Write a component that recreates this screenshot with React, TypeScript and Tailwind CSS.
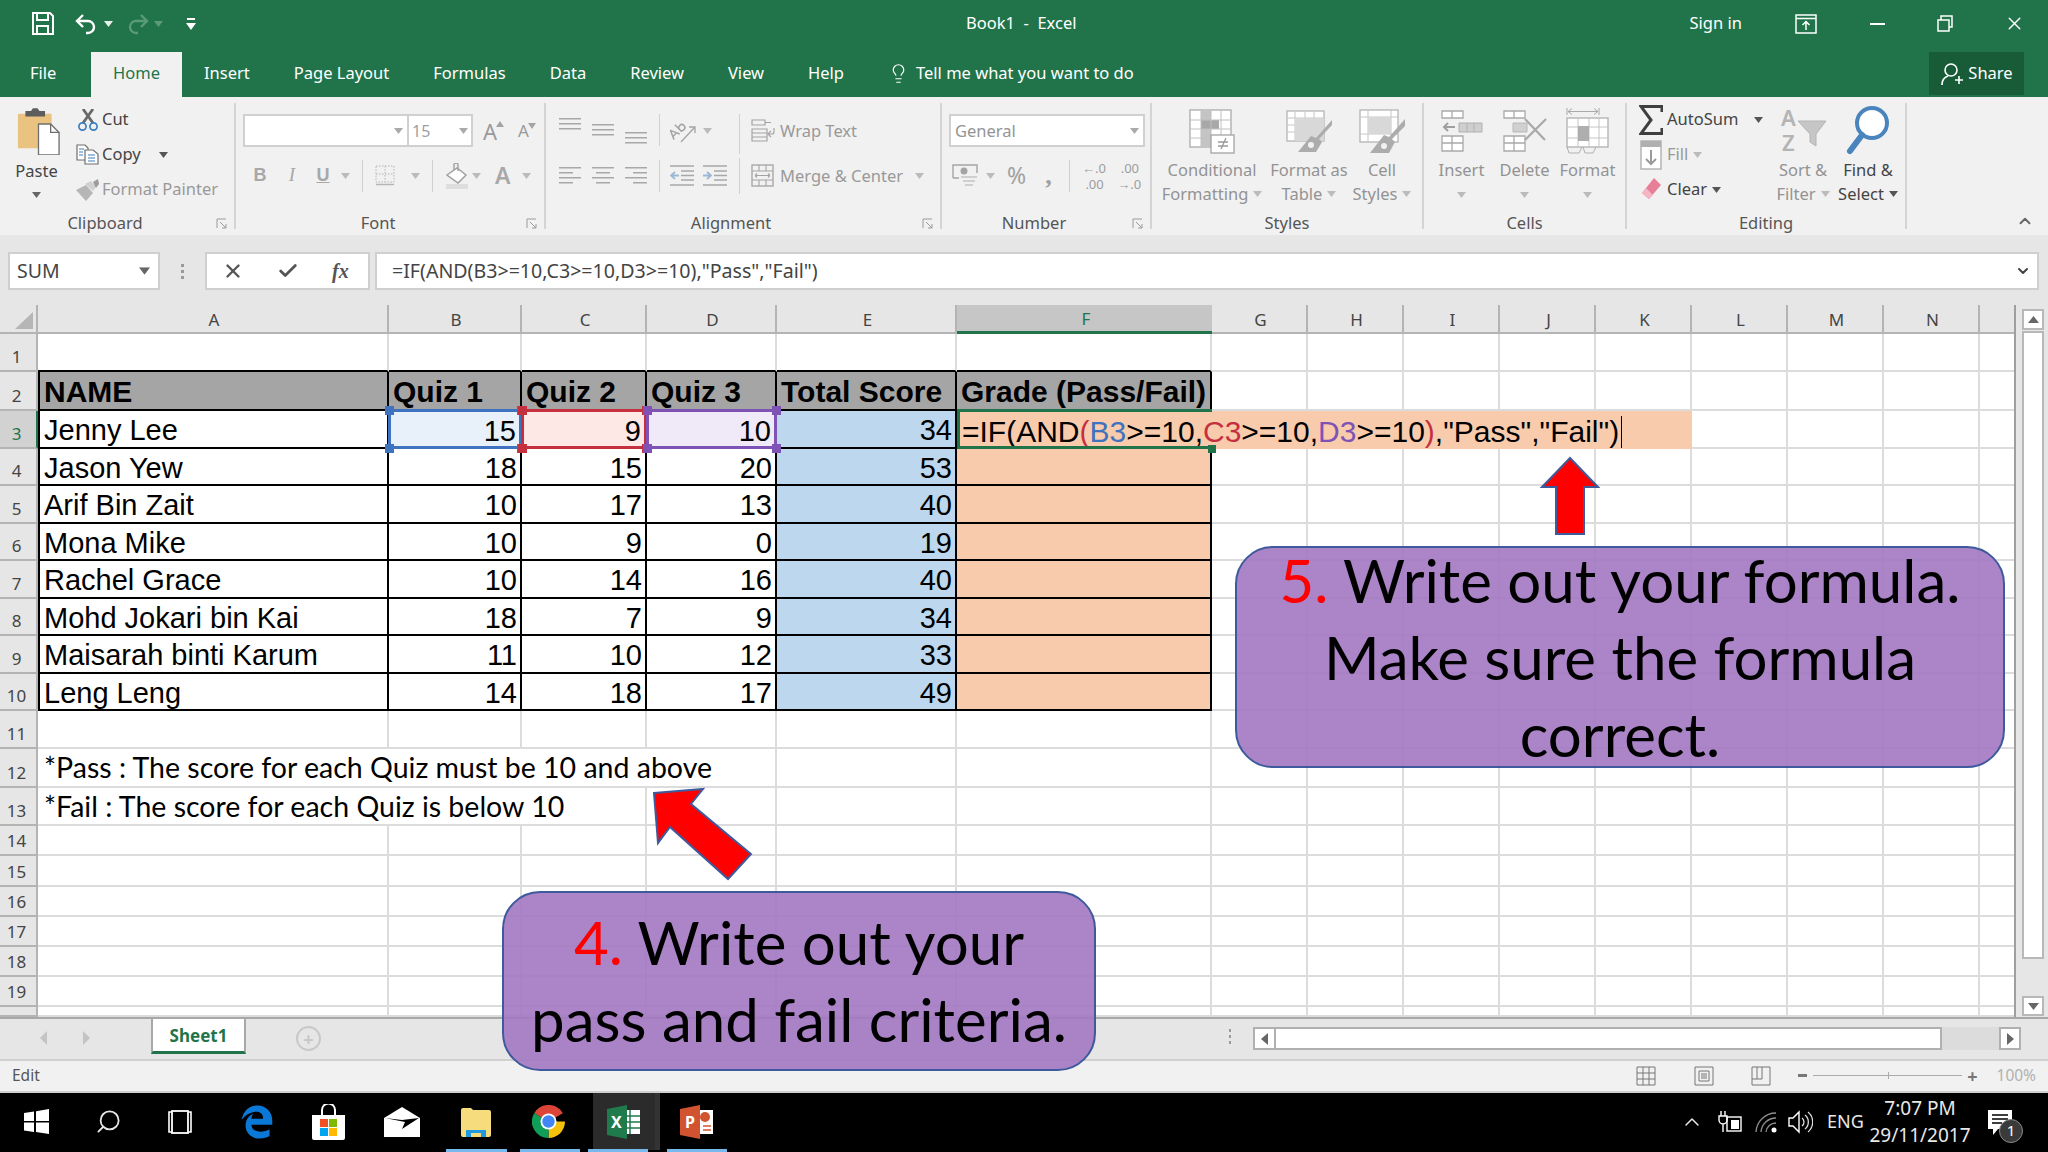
import { ReactNode } from "react";
import { Check, ChevronDown, ChevronUp, Lightbulb, Search, X } from "lucide-react";
import { FaEdgeLegacy } from "react-icons/fa";

function Caret({ color = "#8a8a8a", className = "" }: { color?: string; className?: string }) {
  return (
    <svg width="9" height="6" viewBox="0 0 9 6" className={className}>
      <path d="M0 0h9L4.5 6z" fill={color} />
    </svg>
  );
}

// alignment glyph: list of [y, x, length]
function Lines({ rows }: { rows: [number, number, number][] }) {
  const h = Math.max(...rows.map((r) => r[0])) + 2;
  return (
    <svg width="22" height={h} viewBox={`0 0 22 ${h}`} className="shrink-0">
      {rows.map(([y, x, len], i) => (
        <rect key={i} x={x} y={y} width={len} height="1.5" fill="#a8a8a8" />
      ))}
    </svg>
  );
}
const THREE: [number, number, number][] = [[0, 0, 22], [5, 0, 22], [10, 0, 22]];

// ---- clipboard
const PasteIcon = () => (
  <svg width="43" height="47" viewBox="0 0 46 50">
    <rect x="1" y="6" width="36" height="37" rx="1" fill="#e9c37f" />
    <path d="M9 6V3h6l2-3h5l2 3h6v6H9z" fill="#5d5d5d" />
    <path d="M23 17h13l9 9v24H23z" fill="#fff" stroke="#6f6f6f" strokeWidth="1.4" />
    <path d="M36 17v9h9" fill="none" stroke="#6f6f6f" strokeWidth="1.4" />
  </svg>
);
const CutIcon = () => (
  <svg width="22" height="22" viewBox="0 0 22 22">
    <path d="M6 0l10 14M16 0L6 14" stroke="#686868" strokeWidth="2.8" fill="none" />
    <circle cx="5.5" cy="17.5" r="3.6" fill="none" stroke="#3d7ec0" strokeWidth="1.7" />
    <circle cx="16.5" cy="17.5" r="3.6" fill="none" stroke="#3d7ec0" strokeWidth="1.7" />
  </svg>
);
const CopyIcon = () => (
  <svg width="23" height="21" viewBox="0 0 23 21">
    <path d="M1 1h8l3 3v12H1z" fill="#fff" stroke="#6f6f6f" strokeWidth="1.2" />
    <path d="M9 6h8l5 4v10H9z" fill="#fff" stroke="#6f6f6f" strokeWidth="1.2" />
    <path d="M3 5h5M3 8h4M3 11h4M12 11h7M12 14h7M12 17h7" stroke="#3d7ec0" strokeWidth="1.2" />
  </svg>
);
const PainterIcon = () => (
  <svg width="24" height="22" viewBox="0 0 24 22">
    <path d="M0 11l10-5 7 8-7 8z" fill="#b6b6b6" />
    <path d="M9 5l6-3 5 6-3 4z" fill="#d0d0d0" />
    <path d="M17 3l5-3 1 5-3 4z" fill="#9c9c9c" />
  </svg>
);

// ---- font group
const FontA = ({ size, up }: { size: number; up: boolean }) => (
  <span className="flex items-start">
    <span style={{ fontSize: size }} className="leading-none text-[#9a9a9a]">A</span>
    <svg width="8" height="6" viewBox="0 0 8 6" className="-ml-[1px] mt-[1px]">
      <path d={up ? "M4 0l4 6H0z" : "M0 0h8L4 6z"} fill="#a4a4a4" />
    </svg>
  </span>
);
const BorderIcon = () => (
  <svg width="20" height="21" viewBox="0 0 20 21">
    <rect x="1" y="1" width="18" height="16" fill="none" stroke="#b5b5b5" strokeDasharray="1.5 1.5" />
    <path d="M10 1v16M1 9h18" stroke="#b5b5b5" strokeDasharray="1.5 1.5" />
    <path d="M1 19.5h18" stroke="#b5b5b5" strokeWidth="1.5" />
  </svg>
);
const FillIcon = () => (
  <svg width="24" height="26" viewBox="0 0 24 26">
    <path d="M1 12L11 5l9 7-8 8z" fill="#fff" stroke="#a0a0a0" strokeWidth="1.5" />
    <path d="M8 7V2a2 2 0 014 0v6" fill="none" stroke="#a0a0a0" strokeWidth="1.4" />
    <rect x="0" y="21" width="22" height="5" fill="#dedede" />
  </svg>
);

// ---- alignment
const OrientIcon = () => (
  <svg width="27" height="27" viewBox="0 0 27 27">
    <g transform="rotate(-45 9 12)" stroke="#a4a4a4" fill="none" strokeWidth="1.5">
      <path d="M-2 16l4-9 4 9M-1 13h6" />
      <path d="M9 6v10M9 13a3 3 0 106 0 3 3 0 10-6 0" />
    </g>
    <path d="M11 25l13-14M19 10h6v6" stroke="#a4a4a4" fill="none" strokeWidth="1.3" />
  </svg>
);
const IndentIcon = ({ right }: { right: boolean }) => (
  <svg width="24" height="21" viewBox="0 0 24 21">
    <path d="M0 1h24M11 6h13M11 10.5h13M11 15h13M0 20h24" stroke="#a8a8a8" strokeWidth="1.4" />
    <path d={right ? "M0 10.5h7M4 7l4 3.5L4 14" : "M9 10.5H2M5 7l-4 3.5L5 14"} stroke="#9db8d4" strokeWidth="1.8" fill="none" />
  </svg>
);
const WrapIcon = () => (
  <svg width="24" height="23" viewBox="0 0 24 23">
    <path d="M1 1h13v5H1zM1 10h15v12H1zM1 14h15M1 18h15" stroke="#a4a4a4" fill="none" strokeWidth="1.2" />
    <path d="M14 3.5h6M23 9v4a2 2 0 01-2 2h-3M20 12l-3 3 3 3" stroke="#a4a4a4" fill="none" strokeWidth="1.2" />
  </svg>
);
const MergeIcon = () => (
  <svg width="23" height="23" viewBox="0 0 23 23">
    <rect x="1" y="1" width="21" height="21" fill="none" stroke="#a4a4a4" strokeWidth="1.3" />
    <path d="M1 7h21M1 16h21M8 1v6M15 1v6M8 16v6M15 16v6M4 11.5h15M4 11.5l2-2M4 11.5l2 2M19 11.5l-2-2M19 11.5l-2 2" stroke="#a4a4a4" fill="none" strokeWidth="1.1" />
  </svg>
);

// ---- number
const AccountingIcon = () => (
  <svg width="26" height="24" viewBox="0 0 26 24">
    <path d="M1 14V1h24v8M1 14h6" stroke="#a4a4a4" fill="none" strokeWidth="1.4" />
    <circle cx="12" cy="7" r="3.5" fill="#a4a4a4" />
    <path d="M9 13h16M11 17h12M13 21h8" stroke="#cfcfcf" strokeWidth="2.2" />
  </svg>
);
const DecIcon = ({ inc }: { inc: boolean }) => (
  <span className="flex flex-col items-start text-[13px] leading-[16px] text-[#9d9d9d]">
    {inc ? (
      <>
        <span className="whitespace-pre"> ←.0</span>
        <span className="whitespace-pre">  .00</span>
      </>
    ) : (
      <>
        <span className="whitespace-pre">  .00</span>
        <span className="whitespace-pre"> →.0</span>
      </>
    )}
  </span>
);

// ---- styles
const CondIcon = () => (
  <svg width="46" height="45" viewBox="0 0 46 45">
    <rect x="1" y="1" width="41" height="37" fill="#fff" stroke="#ababab" strokeWidth="1.3" />
    <rect x="12" y="1" width="10" height="37" fill="#c4c4c4" />
    <rect x="12" y="11" width="18" height="9" fill="#a8a8a8" />
    <path d="M1 11h41M1 20h41M1 29h41M12 1v37M22 1v37M32 1v37" stroke="#c0c0c0" />
    <rect x="22" y="26" width="23" height="18" fill="#fff" stroke="#a4a4a4" strokeWidth="1.3" />
    <path d="M29 33h10M29 37h10M37 29l-5 11" stroke="#999" strokeWidth="1.3" />
  </svg>
);
const TableIcon = () => (
  <svg width="46" height="42" viewBox="0 0 46 42">
    <rect x="1" y="1" width="37" height="30" fill="#fff" stroke="#b4b4b4" strokeWidth="1.3" />
    <path d="M1 8h37M1 15h37M1 22h37M9 1v30M19 1v30M28 1v30" stroke="#c6c6c6" />
    <rect x="9" y="8" width="29" height="23" fill="#d8d8d8" />
    <path d="M46 10L30 28 25 26 12 42h18l6-10-3-3 13-14z" fill="#acacac" />
    <circle cx="25" cy="35" r="3" fill="#f1f1f1" />
  </svg>
);
const CellStyleIcon = () => (
  <svg width="46" height="44" viewBox="0 0 46 44">
    <rect x="1" y="1" width="38" height="32" fill="#fff" stroke="#b4b4b4" strokeWidth="1.3" />
    <path d="M1 8h38M1 25h38M9 1v32M32 1v32" stroke="#c6c6c6" />
    <rect x="9" y="8" width="23" height="17" fill="#d8d8d8" />
    <path d="M46 10L30 28l-5-2-14 18h19l6-11-3-3 13-13z" fill="#acacac" />
    <circle cx="25" cy="37" r="3" fill="#f1f1f1" />
  </svg>
);

// ---- cells
const InsertIcon = () => (
  <svg width="42" height="42" viewBox="0 0 42 42">
    <path d="M1 1h21v7H1zM11 1v7M1 26h21v15H1zM1 33h21M11 26v15" fill="#fff" stroke="#a9a9a9" strokeWidth="1.3" />
    <path d="M18 13h23v9H18zM26 13v9M33 13v9" fill="#cfcfcf" stroke="#b0b0b0" />
    <path d="M14 17H3M7 13l-4 4 4 4" fill="none" stroke="#a0a0a0" strokeWidth="2" />
  </svg>
);
const DeleteIcon = () => (
  <svg width="44" height="42" viewBox="0 0 44 42">
    <path d="M1 1h21v7H1zM11 1v7M1 26h21v15H1zM1 33h21M11 26v15" fill="#fff" stroke="#a9a9a9" strokeWidth="1.3" />
    <path d="M10 13h14v9H10z" fill="#d0d0d0" stroke="#b8b8b8" />
    <path d="M22 30L43 9M22 9l20 21" stroke="#a8a8a8" strokeWidth="2.2" />
  </svg>
);
const FormatIcon = () => (
  <svg width="43" height="46" viewBox="0 0 43 46">
    <path d="M1 0v7M33 0v7M2 3.5h30M2 3.5l4-3M2 3.5l4 3M32 3.5l-4-3M32 3.5l-4 3" stroke="#a9a9a9" fill="none" />
    <rect x="1" y="10" width="41" height="29" fill="#fff" stroke="#b0b0b0" strokeWidth="1.3" />
    <path d="M1 19h41M1 30h41M12 10v29M23 10v29M33 10v29" stroke="#c4c4c4" />
    <rect x="12" y="18" width="11" height="15" fill="#aeaeae" />
    <path d="M1 39l2 6h10l3-6M17 39l2 6h8l3-6" stroke="#b0b0b0" fill="none" />
  </svg>
);

// ---- editing
const SigmaIcon = () => (
  <svg width="24" height="30" viewBox="0 0 24 30">
    <path d="M23 7V1.5H2L12 15 2 28.5h21V23" fill="none" stroke="#3f3f3f" strokeWidth="3" />
  </svg>
);
const FillDownIcon = () => (
  <svg width="22" height="30" viewBox="0 0 22 30">
    <rect x="1" y="1" width="20" height="28" fill="#fff" stroke="#b0b0b0" strokeWidth="1.4" />
    <rect x="1" y="1" width="20" height="6" fill="#b0b0b0" />
    <path d="M11 10v14M6 19l5 5 5-5" fill="none" stroke="#9a9a9a" strokeWidth="2" />
  </svg>
);
const EraserIcon = () => (
  <svg width="20" height="24" viewBox="0 0 20 24">
    <path d="M13 0l7 7L8 21l-7-6z" fill="#e77f97" />
    <path d="M5 10l7 7-4 4-7-6z" fill="#f3b6c4" />
  </svg>
);
const SortIcon = () => (
  <svg width="48" height="50" viewBox="0 0 48 50" className="overflow-visible">
    <text x="2" y="20" fontFamily="'Noto Sans'" fontSize="22" fontWeight="600" fill="#b4b4b4">A</text>
    <text x="3" y="45" fontFamily="'Noto Sans'" fontSize="22" fontWeight="600" fill="#b4b4b4">Z</text>
    <path d="M19 15h28L37 28v12l-6-4v-8z" fill="#c6c6c6" stroke="#b4b4b4" />
  </svg>
);
const FindIcon = () => (
  <svg width="44" height="52" viewBox="0 0 44 52">
    <circle cx="26" cy="18" r="15" fill="#fff" stroke="#4a84bd" strokeWidth="4" />
    <path d="M16 30L4 46" stroke="#4a84bd" strokeWidth="6" strokeLinecap="round" />
  </svg>
);

// ---- ribbon building blocks
function Group({ width, label, launcher, children }: { width: string; label: string; launcher?: boolean; children: ReactNode }) {
  return (
    <div className={`${width} flex h-[126px] flex-col border-r-2 border-[#d4d4d4]`}>
      <div className="flex h-[110px] shrink-0">{children}</div>
      <div className={`relative flex h-[20px] shrink-0 items-center justify-center text-[16.5px] text-[#555] ${launcher ? "pr-[24px]" : ""}`}>
        {label}
        {launcher && (
          <svg width="11" height="11" viewBox="0 0 11 11" className="absolute bottom-[4px] right-[7px]">
            <path d="M1 10V1h9M4 4l6 6M10 6v4H6" fill="none" stroke="#9a9a9a" />
          </svg>
        )}
      </div>
    </div>
  );
}

function SmallBtn({ icon, label, muted, caret }: { icon: ReactNode; label: string; muted?: boolean; caret?: boolean }) {
  return (
    <div className="flex h-[35px] items-center">
      <div className="flex w-[29px] justify-center">{icon}</div>
      <span className={`text-[16.5px] ${muted ? "text-[#999]" : "text-[#444]"}`}>{label}</span>
      {caret && <Caret color={muted ? "#bbb" : "#555"} className="ml-[18px]" />}
    </div>
  );
}

function BigBtn({ width, icon, lines, caretInline, muted = true }: { width: string; icon: ReactNode; lines: string[]; caretInline?: boolean; muted?: boolean }) {
  return (
    <div className={`${width} flex flex-col items-center text-[16.5px] leading-[24px] ${muted ? "text-[#939393]" : "text-[#444]"}`}>
      <div className="flex h-[56px] items-center justify-center">{icon}</div>
      {lines.map((l, i) => (
        <span key={l} className="flex -translate-y-[1px] items-center whitespace-nowrap">
          {l}
          {caretInline && i === lines.length - 1 && <Caret color={muted ? "#bbb" : "#555"} className="ml-[5px]" />}
        </span>
      ))}
      {!caretInline && <span className="flex h-[24px] items-center"><Caret color="#bbb" /></span>}
    </div>
  );
}

const ALIGN_LEFT: [number, number, number][] = [[0, 0, 22], [5, 0, 14], [10, 0, 22], [15, 0, 14]];
const ALIGN_CENTER: [number, number, number][] = [[0, 0, 22], [5, 4, 14], [10, 0, 22], [15, 4, 14]];
const ALIGN_RIGHT: [number, number, number][] = [[0, 0, 22], [5, 8, 14], [10, 0, 22], [15, 8, 14]];

function Ribbon() {
  return (
    <div className="relative flex h-[138px] bg-[#f1f1f1] pt-[6px] font-['Noto_Sans',sans-serif]">
      <Group width="w-[236px]" label="Clipboard" launcher>
        <div className="flex w-[73px] flex-col items-center text-[16.5px] leading-[24px] text-[#444]">
          <div className="flex h-[56px] items-center pl-[4px]"><PasteIcon /></div>
          <span>Paste</span>
          <span className="flex h-[24px] items-center"><Caret color="#666" /></span>
        </div>
        <div className="-mt-[1px] flex flex-col">
          <SmallBtn icon={<CutIcon />} label="Cut" />
          <SmallBtn icon={<CopyIcon />} label="Copy" caret />
          <SmallBtn icon={<PainterIcon />} label="Format Painter" muted />
        </div>
      </Group>

      <Group width="w-[310px]" label="Font" launcher>
        <div className="flex flex-col pl-[7px] pt-[11px]">
          <div className="flex h-[33px] items-center">
            <div className="flex h-[33px] w-[166px] items-center justify-end border-2 border-[#d0d0d0] bg-white pr-[4px]"><Caret color="#aaa" /></div>
            <div className="flex h-[33px] w-[64px] items-center justify-between border-2 border-l-0 border-[#d0d0d0] bg-white px-[3px] text-[16px] text-[#9f9f9f]">15<Caret color="#aaa" /></div>
            <div className="ml-[10px] flex items-center gap-[14px]">
              <FontA size={22} up />
              <FontA size={17} up={false} />
            </div>
          </div>
          <div className="mt-[12px] flex h-[33px] items-center text-[#a8a8a8]">
            <span className="w-[30px] pl-[4px] text-center font-['Liberation_Sans',sans-serif] text-[18px] font-bold">B</span>
            <span className="w-[30px] pl-[8px] text-center font-['Liberation_Serif',serif] text-[19px] italic">I</span>
            <span className="w-[34px] pl-[6px] text-center font-['Liberation_Sans',sans-serif] text-[18px] font-bold underline">U</span>
            <Caret color="#bbb" className="ml-[4px]" />
            <div className="ml-[12px] mr-[12px] h-[32px] w-px bg-[#d0d0d0]" />
            <BorderIcon />
            <Caret color="#bbb" className="ml-[16px]" />
            <div className="ml-[12px] mr-[13px] h-[32px] w-px bg-[#d0d0d0]" />
            <FillIcon />
            <Caret color="#bbb" className="ml-[2px]" />
            <span className="ml-[14px] text-[23px] font-semibold leading-none">A</span>
            <Caret color="#bbb" className="ml-[12px]" />
          </div>
        </div>
      </Group>

      <Group width="w-[396px]" label="Alignment" launcher>
        <div className="flex flex-col pl-[11px] pt-[11px]">
          <div className="flex h-[33px]">
            <div className="flex w-[102px] gap-[11px] pl-[2px]">
              <div className="mt-[4px]"><Lines rows={THREE} /></div>
              <div className="mt-[10px]"><Lines rows={THREE} /></div>
              <div className="mt-[18px]"><Lines rows={THREE} /></div>
            </div>
            <div className="h-[32px] w-px bg-[#d0d0d0]" />
            <div className="flex items-center pl-[10px]"><OrientIcon /><Caret color="#bbb" className="ml-[6px]" /></div>
            <div className="ml-[27px] h-[40px] w-px bg-[#d0d0d0]" />
            <div className="ml-[11px] flex items-center">
              <WrapIcon />
              <span className="ml-[5px] pt-[2px] text-[16.5px] text-[#999]">Wrap Text</span>
            </div>
          </div>
          <div className="mt-[12px] flex h-[33px] items-center">
            <div className="flex w-[102px] gap-[11px] pl-[2px]">
              <Lines rows={ALIGN_LEFT} />
              <Lines rows={ALIGN_CENTER} />
              <Lines rows={ALIGN_RIGHT} />
            </div>
            <div className="h-[32px] w-px bg-[#d0d0d0]" />
            <div className="flex items-center gap-[9px] pl-[10px]"><IndentIcon right={false} /><IndentIcon right /></div>
            <div className="ml-[12px] h-[36px] w-px bg-[#d0d0d0]" />
            <div className="ml-[11px] flex items-center">
              <MergeIcon />
              <span className="ml-[6px] pt-[2px] text-[16.5px] text-[#999]">Merge &amp; Center</span>
              <Caret color="#bbb" className="ml-[12px]" />
            </div>
          </div>
        </div>
      </Group>

      <Group width="w-[210px]" label="Number" launcher>
        <div className="flex flex-col pl-[7px] pt-[11px]">
          <div className="flex h-[33px] w-[196px] items-center justify-between border-2 border-[#d0d0d0] bg-white px-[4px] pt-[1px] text-[16.5px] text-[#949494]">General<Caret color="#aaa" /></div>
          <div className="mt-[12px] flex h-[33px] items-center pl-[3px] text-[#a0a0a0]">
            <AccountingIcon />
            <Caret color="#bbb" className="ml-[8px]" />
            <span className="ml-[12px] text-[23px] leading-none">%</span>
            <span className="ml-[19px] font-['Liberation_Serif',serif] text-[26px] font-bold leading-none">,</span>
            <div className="ml-[17px] h-[32px] w-px bg-[#d0d0d0]" />
            <div className="ml-[9px]"><DecIcon inc /></div>
            <div className="ml-[8px]"><DecIcon inc={false} /></div>
          </div>
        </div>
      </Group>

      <Group width="w-[272px]" label="Styles">
        <div className="flex pl-[6px]">
          <BigBtn width="w-[108px]" icon={<CondIcon />} lines={["Conditional", "Formatting"]} caretInline />
          <BigBtn width="w-[86px]" icon={<TableIcon />} lines={["Format as", "Table"]} caretInline />
          <BigBtn width="w-[60px]" icon={<CellStyleIcon />} lines={["Cell", "Styles"]} caretInline />
        </div>
      </Group>

      <Group width="w-[203px]" label="Cells">
        <div className="flex pl-[6px]">
          <BigBtn width="w-[63px]" icon={<InsertIcon />} lines={["Insert"]} />
          <BigBtn width="w-[63px]" icon={<DeleteIcon />} lines={["Delete"]} />
          <BigBtn width="w-[63px]" icon={<FormatIcon />} lines={["Format"]} />
        </div>
      </Group>

      <Group width="w-[280px]" label="Editing">
        <div className="-mt-[1px] flex w-[148px] flex-col pl-[8px]">
          <div className="flex h-[35px] items-center">
            <div className="flex w-[32px] justify-center"><SigmaIcon /></div>
            <span className="text-[16.5px] text-[#444]">AutoSum</span>
            <Caret color="#555" className="ml-[16px]" />
          </div>
          <div className="flex h-[35px] items-center">
            <div className="flex w-[32px] justify-center"><FillDownIcon /></div>
            <span className="text-[16.5px] text-[#999]">Fill</span>
            <Caret color="#bbb" className="ml-[5px]" />
          </div>
          <div className="flex h-[35px] items-center">
            <div className="flex w-[32px] justify-center"><EraserIcon /></div>
            <span className="text-[16.5px] text-[#444]">Clear</span>
            <Caret color="#555" className="ml-[5px]" />
          </div>
        </div>
        <BigBtn width="w-[56px]" icon={<SortIcon />} lines={["Sort &", "Filter"]} caretInline />
        <BigBtn width="w-[74px]" icon={<FindIcon />} lines={["Find &", "Select"]} caretInline muted={false} />
      </Group>

      <ChevronUp className="absolute bottom-[5px] right-[14px] h-[18px] w-[18px] text-[#666]" strokeWidth={2.5} />
    </div>
  );
}

function TitleBar() {
  return (
    <div className="relative flex h-[52px] items-center bg-[#21744a] pb-[5px] pl-[32px] font-['Noto_Sans',sans-serif] text-white">
      <svg width="22" height="23" viewBox="0 0 22 23">
        <path d="M1 1h17l3 3v18H1z" fill="none" stroke="#fff" strokeWidth="2" />
        <path d="M5 1v7h11V1M5 22v-8h11v8" fill="none" stroke="#fff" strokeWidth="2" />
      </svg>
      <svg width="24" height="24" viewBox="0 0 24 24" className="ml-[21px]">
        <path d="M8 3L2 9l6 6" fill="none" stroke="#fff" strokeWidth="2.4" />
        <path d="M3 9h10a6 6 0 016 6v0a6 6 0 01-6 6h-2" fill="none" stroke="#fff" strokeWidth="2.4" />
      </svg>
      <Caret color="#e8f0eb" className="ml-[5px]" />
      <svg width="24" height="24" viewBox="0 0 24 24" className="ml-[12px]">
        <path d="M16 3l6 6-6 6" fill="none" stroke="#5a9a78" strokeWidth="2.4" />
        <path d="M21 9H11a6 6 0 00-6 6v0a6 6 0 006 6h2" fill="none" stroke="#5a9a78" strokeWidth="2.4" />
      </svg>
      <Caret color="#5a9a78" className="ml-[5px]" />
      <svg width="10" height="14" viewBox="0 0 10 14" className="ml-[23px]">
        <path d="M1 1h8v2H1zM0 6h10L5 13z" fill="#fff" />
      </svg>
      <span className="ml-[770px] text-[16.5px] whitespace-pre">Book1  -  Excel</span>
      <span className="ml-[613px] text-[16.5px]">Sign in</span>
      <svg width="22" height="20" viewBox="0 0 22 20" className="ml-[53px]">
        <rect x="1" y="1" width="20" height="18" fill="none" stroke="#fff" strokeWidth="1.5" />
        <path d="M1 4.5h20M11 16V8M7.5 11L11 7.5l3.5 3.5" fill="none" stroke="#fff" strokeWidth="1.5" />
      </svg>
      <div className="ml-[53px] h-[2px] w-[15px] bg-white" />
      <svg width="16" height="17" viewBox="0 0 16 17" className="ml-[52px]">
        <path d="M1 5h11v11H1zM4 5V1h11v11h-3" fill="none" stroke="#fff" strokeWidth="1.5" />
      </svg>
      <X className="ml-[51px] h-[21px] w-[21px]" strokeWidth={1.6} />
    </div>
  );
}

function TabBar() {
  const tabs = ["Insert", "Page Layout", "Formulas", "Data", "Review", "View", "Help"];
  return (
    <div className="flex h-[45px] items-stretch bg-[#21744a] font-['Noto_Sans',sans-serif] text-[16.5px] text-white">
      <span className="flex w-[91px] items-center pb-[2px] pl-[30px]">File</span>
      <span className="flex w-[91px] items-center justify-center bg-[#f1f1f1] pb-[2px] text-[#21744a]">Home</span>
      {tabs.map((t) => (
        <span key={t} className="flex items-center px-[22px] pb-[2px]">{t}</span>
      ))}
      <div className="ml-[22px] flex items-center pb-[2px]">
        <Lightbulb className="h-[21px] w-[21px]" strokeWidth={1.4} />
        <span className="ml-[7px]">Tell me what you want to do</span>
      </div>
      <div className="ml-auto mr-[24px] flex h-[43px] w-[95px] items-center justify-center gap-[4px] bg-[#185c37]">
        <svg width="24" height="24" viewBox="0 0 24 24">
          <circle cx="11" cy="8" r="6" fill="none" stroke="#fff" strokeWidth="1.6" />
          <path d="M2 23c0-5 3-8 6-9M15 18h8M19 14v8" fill="none" stroke="#fff" strokeWidth="1.6" />
        </svg>
        <span>Share</span>
      </div>
    </div>
  );
}

function FormulaBar() {
  return (
    <div className="flex h-[70px] items-center bg-[#e6e6e6] pt-[2px] font-['Noto_Sans',sans-serif]">
      <div className="ml-[8px] flex h-[38px] w-[152px] items-center justify-between border-2 border-[#cfcfcf] bg-white pl-[7px] pr-[9px] text-[19.5px] text-[#444]">
        SUM
        <Caret color="#666" className="scale-125" />
      </div>
      <div className="ml-[21px] flex flex-col gap-[3px]">
        <i className="h-[3px] w-[3px] bg-[#9a9a9a]" />
        <i className="h-[3px] w-[3px] bg-[#9a9a9a]" />
        <i className="h-[3px] w-[3px] bg-[#9a9a9a]" />
      </div>
      <div className="ml-[21px] flex h-[38px] w-[165px] items-center gap-[33px] border-2 border-[#cfcfcf] bg-white pl-[15px] text-[#555]">
        <X className="h-[22px] w-[22px]" strokeWidth={2.6} />
        <Check className="h-[22px] w-[22px]" strokeWidth={3} />
        <span className="font-['Liberation_Serif',serif] text-[20px] font-bold italic">fx</span>
      </div>
      <div className="ml-[5px] flex h-[38px] w-[1664px] items-center justify-between border-2 border-[#cfcfcf] bg-white pl-[15px] pr-[6px] text-[19.6px] text-[#444]">
        =IF(AND(B3&gt;=10,C3&gt;=10,D3&gt;=10),"Pass","Fail")
        <ChevronDown className="h-[16px] w-[16px]" strokeWidth={3} />
      </div>
    </div>
  );
}

const COLS = ["A", "B", "C", "D", "E", "F", "G", "H", "I", "J", "K", "L", "M", "N"];
const TABLE: [string, number, number, number, number][] = [
  ["Jenny Lee", 15, 9, 10, 34],
  ["Jason Yew", 18, 15, 20, 53],
  ["Arif Bin Zait", 10, 17, 13, 40],
  ["Mona Mike", 10, 9, 0, 19],
  ["Rachel Grace", 10, 14, 16, 40],
  ["Mohd Jokari bin Kai", 18, 7, 9, 34],
  ["Maisarah binti Karum", 11, 10, 12, 33],
  ["Leng Leng", 14, 18, 17, 49],
];
const HEADERS = ["NAME", "Quiz 1", "Quiz 2", "Quiz 3", "Total Score", "Grade (Pass/Fail)"];

const blankCell = "border-r-2 border-b-2 border-[#dcdcdc]";
const tableCell = "border-r-2 border-b-2 border-black";

function Blank({ n, from = 0 }: { n: number; from?: number }) {
  return (
    <>
      {Array.from({ length: n }, (_, i) => (
        <div key={from + i} className={blankCell} />
      ))}
    </>
  );
}

function RowHead({ n }: { n: number }) {
  const active = n === 3;
  return (
    <div
      className={`flex items-end justify-center border-b-2 pr-[3px] font-['Noto_Sans',sans-serif] text-[17px] leading-[26px] ${
        active ? "border-r-2 border-r-[#21744a] border-b-[#b4b4b4] bg-[#d2d2d2] text-[#21744a]" : "border-r-2 border-r-[#b4b4b4] border-b-[#b4b4b4] bg-[#e6e6e6] text-[#444]"
      }`}
    >
      {n < 20 ? n : null}
    </div>
  );
}

// a cell the formula refers to: coloured box with square handles in the corners
function RefCell({ value, bg, border, handle }: { value: number; bg: string; border: string; handle: string }) {
  const dot = `absolute h-[9px] w-[9px] ${handle}`;
  return (
    <div className={`relative flex items-center justify-end pr-[6px] pt-[4px] ${bg}`}>
      {value}
      <div className={`absolute -left-[1px] -top-[2px] bottom-0 right-0 border-[3px] ${border}`} />
      <i className={`${dot} -left-[4px] -top-[5px]`} />
      <i className={`${dot} -left-[4px] -bottom-[4px]`} />
      <i className={`${dot} -right-[4px] -top-[5px]`} />
      <i className={`${dot} -right-[4px] -bottom-[4px]`} />
    </div>
  );
}

function Sheet() {
  return (
    <div className="grid h-[712px] w-[2016px] grid-cols-[38px_351px_133px_125px_130px_180px_255px_repeat(8,96px)_36px] grid-rows-[29px_38px_39px_38px_37px_38px_37px_38px_37px_38px_37px_38px_39px_38px_30px_31px_30px_30px_30px_30px_10px] overflow-hidden border-r-2 border-[#9f9f9f] bg-white font-['Liberation_Sans',Arial,sans-serif] text-[29px] text-black">
      {/* column heads */}
      <div className="relative border-r-2 border-b-2 border-[#b4b4b4] bg-[#e6e6e6]">
        <svg width="18" height="17" viewBox="0 0 18 17" className="absolute left-[15px] top-[7px]">
          <path d="M18 0v17H0z" fill="#b6b6b6" />
        </svg>
      </div>
      {COLS.map((c) => (
        <div
          key={c}
          className={`flex items-center justify-center pl-[3px] pt-[2px] font-['Noto_Sans',sans-serif] text-[17px] ${
            c === "F" ? "border-b-[3px] border-b-[#21744a] bg-[#c6c6c6] text-[#21744a]" : "border-r-2 border-b-2 border-[#b4b4b4] bg-[#e6e6e6] text-[#444]"
          }`}
        >
          {c}
        </div>
      ))}
      <div className="border-b-2 border-[#b4b4b4] bg-[#e6e6e6]" />

      {/* row 1 */}
      <RowHead n={1} />
      {HEADERS.map((h) => (
        <div key={h} className="border-r-2 border-b-2 border-r-[#dcdcdc] border-b-black" />
      ))}
      <Blank n={9} />

      {/* row 2 */}
      <RowHead n={2} />
      {HEADERS.map((h, i) => (
        <div key={h} className={`flex items-center whitespace-nowrap bg-[#a5a5a5] pl-[4px] pt-[2px] text-[30px] font-bold ${tableCell} ${i === 0 ? "border-l-2" : ""}`}>
          {h}
        </div>
      ))}
      <Blank n={9} />

      {/* rows 3 to 10 */}
      {TABLE.map(([name, q1, q2, q3, total], i) => (
        <div key={name} className="contents">
          <RowHead n={i + 3} />
          <div className={`flex items-center whitespace-nowrap border-l-2 pl-[4px] pt-[4px] ${tableCell}`}>{name}</div>
          {i === 0 ? (
            <>
              <RefCell value={q1} bg="bg-[#e8f0fa]" border="border-[#3f72bf]" handle="bg-[#3f72bf]" />
              <RefCell value={q2} bg="bg-[#fde8e6]" border="border-[#c5303f]" handle="bg-[#c5303f]" />
              <RefCell value={q3} bg="bg-[#f0eaf8]" border="border-[#7f52b5]" handle="bg-[#7f52b5]" />
            </>
          ) : (
            [q1, q2, q3].map((q, j) => (
              <div key={j} className={`flex items-center justify-end pr-[3px] pt-[4px] ${tableCell}`}>{q}</div>
            ))
          )}
          <div className={`flex items-center justify-end bg-[#bdd7ee] pr-[3px] pt-[4px] ${tableCell}`}>{total}</div>
          {i === 0 ? (
            <>
              <div className="relative col-span-6 flex items-center whitespace-nowrap bg-[#f8cbad] pl-[5px] pt-[3px] text-[30px]">
                =IF(AND<span className="text-[#c5303f]">(</span>
                <span className="text-[#3f72bf]">B3</span>&gt;=10,
                <span className="text-[#c5303f]">C3</span>&gt;=10,
                <span className="text-[#7f52b5]">D3</span>&gt;=10
                <span className="text-[#c5303f]">)</span>,"Pass","Fail")
                <span className="ml-[2px] h-[32px] w-px bg-black" />
                <div className="absolute -top-[2px] bottom-0 left-0 w-[255px] border-[3px] border-r-0 border-[#21744a]" />
                <i className="absolute -bottom-[4px] left-[251px] h-[8px] w-[8px] bg-[#21744a]" />
              </div>
              <Blank n={4} />
            </>
          ) : (
            <>
              <div className={`bg-[#f8cbad] ${tableCell}`} />
              <Blank n={9} />
            </>
          )}
        </div>
      ))}

      {/* rows 11 to 20 */}
      <RowHead n={11} />
      <Blank n={15} />
      <RowHead n={12} />
      <div className={`col-span-4 flex items-center whitespace-nowrap pl-[6px] font-['Lato',sans-serif] text-[28.5px] ${blankCell}`}>
        *Pass : The score for each Quiz must be 10 and above
      </div>
      <Blank n={11} />
      <RowHead n={13} />
      <div className={`col-span-3 flex items-center whitespace-nowrap pl-[6px] font-['Lato',sans-serif] text-[28.5px] ${blankCell}`}>
        *Fail : The score for each Quiz is below 10
      </div>
      <Blank n={12} />
      {[14, 15, 16, 17, 18, 19, 20].map((n) => (
        <div key={n} className="contents">
          <RowHead n={n} />
          <Blank n={15} />
        </div>
      ))}
    </div>
  );
}

function VScroll() {
  return (
    <div className="flex h-[712px] w-[32px] flex-col items-center bg-[#e6e6e6] pl-[2px] pt-[4px]">
      <div className="flex h-[21px] w-[22px] items-center justify-center border-2 border-[#b8b8b8] bg-white">
        <svg width="11" height="7" viewBox="0 0 11 7"><path d="M5.5 0L11 7H0z" fill="#666" /></svg>
      </div>
      <div className="mt-[1px] h-[628px] w-[22px] border-2 border-[#b8b8b8] bg-white" />
      <div className="flex-1" />
      <div className="mb-[1px] flex h-[20px] w-[22px] items-center justify-center border-2 border-[#b8b8b8] bg-white">
        <svg width="11" height="7" viewBox="0 0 11 7"><path d="M0 0h11L5.5 7z" fill="#666" /></svg>
      </div>
    </div>
  );
}

function SheetTabs() {
  return (
    <div className="flex h-[42px] items-start border-t-2 border-[#a8a8a8] bg-[#e6e6e6] font-['Noto_Sans',sans-serif]">
      <div className="flex w-[151px] items-center gap-[36px] pl-[40px] pt-[12px]">
        <svg width="7" height="14" viewBox="0 0 7 14"><path d="M7 0v14L0 7z" fill="#c4c4c4" /></svg>
        <svg width="7" height="14" viewBox="0 0 7 14"><path d="M0 0v14l7-7z" fill="#c4c4c4" /></svg>
      </div>
      <div className="-mt-[2px] flex h-[37px] w-[95px] items-center justify-center border-x-2 border-t-2 border-b-[3px] border-x-[#a8a8a8] border-t-[#a8a8a8] border-b-[#21744a] bg-white pt-[1px] text-[17px] font-bold text-[#21744a]">
        Sheet1
      </div>
      <div className="ml-[50px] mt-[7px] flex h-[25px] w-[25px] items-center justify-center rounded-full border-2 border-[#c8c8c8] text-[18px] font-bold leading-none text-[#c8c8c8]">+</div>
      <div className="ml-[908px] mt-[10px] flex flex-col gap-[3px]">
        <i className="h-[3px] w-[2px] bg-[#9a9a9a]" />
        <i className="h-[3px] w-[2px] bg-[#9a9a9a]" />
        <i className="h-[3px] w-[2px] bg-[#9a9a9a]" />
      </div>
      <div className="ml-[22px] mt-[8px] flex h-[23px] w-[768px] items-stretch">
        <div className="flex w-[23px] items-center justify-center border-2 border-[#b0b0b0] bg-white">
          <svg width="7" height="12" viewBox="0 0 7 12"><path d="M7 0v12L0 6z" fill="#666" /></svg>
        </div>
        <div className="w-[666px] border-2 border-l-0 border-[#b0b0b0] bg-white" />
        <div className="w-[57px] bg-[#dcdcdc]" />
        <div className="flex w-[22px] items-center justify-center border-2 border-[#b0b0b0] bg-white">
          <svg width="7" height="12" viewBox="0 0 7 12"><path d="M0 0v12l7-6z" fill="#666" /></svg>
        </div>
      </div>
    </div>
  );
}

function StatusBar() {
  return (
    <div className="flex h-[32px] items-center border-t-2 border-[#d0d0d0] bg-[#f1f1f1] pb-[1px] pl-[12px] pr-[12px] font-['Noto_Sans',sans-serif] text-[15.5px] text-[#555]">
      <span>Edit</span>
      <div className="ml-auto flex items-center">
        <svg width="20" height="20" viewBox="0 0 20 20">
          <path d="M1 1h18v18H1zM1 7h18M1 13h18M7 1v18M13 1v18" fill="none" stroke="#777" />
        </svg>
        <svg width="20" height="20" viewBox="0 0 20 20" className="ml-[38px]">
          <path d="M1 1h18v18H1zM5 5h10v10H5zM7 8h6M7 10h6M7 12h6" fill="none" stroke="#777" />
        </svg>
        <svg width="20" height="20" viewBox="0 0 20 20" className="ml-[37px]">
          <path d="M1 1h18v18H1zM1 13h10V1M6 1v12" fill="none" stroke="#777" />
        </svg>
        <span className="ml-[27px] h-[3px] w-[9px] bg-[#777]" />
        <span className="relative ml-[6px] h-px w-[149px] bg-[#aaa]">
          <i className="absolute -top-[3px] left-[75px] h-[7px] w-px bg-[#aaa]" />
        </span>
        <span className="ml-[5px] text-[18px] font-bold leading-none text-[#777]">+</span>
        <span className="ml-[19px] text-[#b0b0b0]">100%</span>
      </div>
    </div>
  );
}

function TaskIcon({ w, children }: { w: string; children: ReactNode }) {
  return <div className={`${w} flex items-center justify-center`}>{children}</div>;
}

function Taskbar() {
  return (
    <div className="relative flex h-[61px] items-stretch border-t-2 border-[#cfcfcf] bg-black pb-[2px] font-['Noto_Sans',sans-serif] text-[#e8e8e8]">
      <TaskIcon w="w-[72px]">
        <svg width="25" height="25" viewBox="0 0 25 25">
          <path d="M0 4l10-1.5V12H0zM12 2.2L25 0v12H12zM0 13.5h10V23L0 21.5zM12 13.5h13V25l-13-2z" fill="#fff" />
        </svg>
      </TaskIcon>
      <TaskIcon w="w-[72px]">
        <Search className="h-[27px] w-[27px] -scale-x-100" strokeWidth={1.6} />
      </TaskIcon>
      <TaskIcon w="w-[72px]">
        <svg width="32" height="24" viewBox="0 0 32 24">
          <path d="M8 2H5v20h3M24 2h3v20h-3" fill="none" stroke="#fff" strokeWidth="1.6" />
          <rect x="8" y="1" width="16" height="22" fill="none" stroke="#fff" strokeWidth="1.8" />
        </svg>
      </TaskIcon>
      <TaskIcon w="w-[76px]">
        <FaEdgeLegacy className="ml-[5px] h-[34px] w-[34px] text-[#0a78d7]" />
      </TaskIcon>
      <TaskIcon w="w-[73px]">
        <svg width="35" height="36" viewBox="0 0 35 36">
          <path d="M1 11h33v23a2 2 0 01-2 2H3a2 2 0 01-2-2z" fill="#fff" />
          <path d="M11 14V6a6 6 0 0113 0v8" fill="none" stroke="#fff" strokeWidth="2" />
          <rect x="9" y="15" width="8" height="8" fill="#f25022" />
          <rect x="18" y="15" width="8" height="8" fill="#7fba00" />
          <rect x="9" y="24" width="8" height="8" fill="#00a4ef" />
          <rect x="18" y="24" width="8" height="8" fill="#ffb900" />
        </svg>
      </TaskIcon>
      <TaskIcon w="w-[74px]">
        <svg width="36" height="30" viewBox="0 0 36 30">
          <path d="M0 11L18 0l18 11v19H0z" fill="#fff" />
          <path d="M1 11l17 2 17-2-17 11 3-7z" fill="#000" />
        </svg>
      </TaskIcon>
      <TaskIcon w="w-[73px]">
        <svg width="32" height="30" viewBox="0 0 32 30">
          <path d="M1 3a2 2 0 012-2h8l2 2h16a2 2 0 012 2v23a2 2 0 01-2 2H3a2 2 0 01-2-2z" fill="#f6dc7d" />
          <path d="M6 30v-7h20v7h-5v-4H11v4z" fill="#1f9ae0" />
        </svg>
      </TaskIcon>
      <TaskIcon w="w-[73px]">
        <svg width="33" height="33" viewBox="0 0 33 33">
          <path d="M16.5 16.5L2.2 8.2A16.5 16.5 0 0130.8 8.2z" fill="#db4437" />
          <path d="M16.5 16.5H33A16.5 16.5 0 0116.5 33z" fill="#f4c20d" />
          <path d="M16.5 16.5V33A16.5 16.5 0 012.2 8.2z" fill="#0f9d58" />
          <circle cx="16.5" cy="16.5" r="8" fill="#fff" />
          <circle cx="16.5" cy="16.5" r="6.2" fill="#4285f4" />
        </svg>
      </TaskIcon>
      <div className="ml-[8px] flex w-[67px] items-center justify-center border-r-[5px] border-[#333] bg-[#2b2b2b]">
        <svg width="34" height="34" viewBox="0 0 34 34">
          <rect x="13" y="5" width="20" height="24" fill="#fff" />
          <path d="M13 11h20M13 17h20M13 23h20M23 5v24" stroke="#1f7a4c" strokeWidth="1.5" />
          <path d="M0 4l20-4v34L0 30z" fill="#1f7a4c" />
          <text x="4" y="23" fontFamily="'Noto Sans'" fontSize="16" fontWeight="700" fill="#fff">X</text>
        </svg>
      </div>
      <TaskIcon w="w-[73px]">
        <svg width="34" height="34" viewBox="0 0 34 34">
          <rect x="13" y="5" width="20" height="24" fill="#fff" />
          <circle cx="25" cy="12" r="5" fill="#d2532f" />
          <path d="M23 21h8M23 25h8" stroke="#d2532f" strokeWidth="1.5" />
          <path d="M0 4l20-4v34L0 30z" fill="#d2532f" />
          <text x="5" y="23" fontFamily="'Noto Sans'" fontSize="16" fontWeight="700" fill="#fff">P</text>
        </svg>
      </TaskIcon>

      {/* running-app bars under the taskbar buttons */}
      <i className="absolute bottom-0 left-[446px] h-[3px] w-[61px] bg-[#76b9ed]" />
      <i className="absolute bottom-0 left-[520px] h-[3px] w-[60px] bg-[#76b9ed]" />
      <i className="absolute bottom-0 left-[588px] h-[3px] w-[60px] bg-[#76b9ed]" />
      <i className="absolute bottom-0 left-[667px] h-[3px] w-[60px] bg-[#76b9ed]" />

      <div className="ml-auto flex items-center pr-[35px]">
        <ChevronUp className="h-[24px] w-[24px]" strokeWidth={1.5} />
        <svg width="24" height="24" viewBox="0 0 24 24" className="ml-[14px]">
          <rect x="9" y="7" width="14" height="14" fill="none" stroke="#fff" strokeWidth="1.4" />
          <rect x="13" y="10" width="8" height="9" fill="#fff" />
          <path d="M3 1v5M7 1v5M1 6h8v4a4 4 0 01-8 0zM5 14v8" fill="none" stroke="#fff" strokeWidth="1.4" />
        </svg>
        <svg width="22" height="24" viewBox="0 0 22 24" className="ml-[13px]">
          <path d="M1 22A20 20 0 0121 3M6 22A15 15 0 0121 8M11 22a10 10 0 0110-9" fill="none" stroke="#8e8e8e" strokeWidth="1.3" />
          <circle cx="19" cy="20" r="2.5" fill="#fff" />
        </svg>
        <svg width="26" height="26" viewBox="0 0 26 26" className="ml-[10px]">
          <path d="M2 9h4l6-6v20l-6-6H2z" fill="none" stroke="#fff" strokeWidth="1.4" />
          <path d="M15 9a5 5 0 010 8M18 6a9 9 0 010 14M21 3a13 13 0 010 20" fill="none" stroke="#ddd" strokeWidth="1.3" />
        </svg>
        <span className="ml-[14px] w-[36px] whitespace-nowrap text-[18px]">ENG</span>
        <div className="ml-[7px] flex w-[100px] flex-col items-center text-[19px] leading-[27px]">
          <span>7:07 PM</span>
          <span>29/11/2017</span>
        </div>
        <div className="relative ml-[17px]">
          <svg width="26" height="26" viewBox="0 0 26 26">
            <path d="M1 1h24v19h-14l-5 6v-6H1z" fill="#fff" />
            <path d="M5 6h16M5 10h16M5 14h10" stroke="#000" strokeWidth="1.6" />
          </svg>
          <span className="absolute -bottom-[8px] -right-[10px] flex h-[24px] w-[24px] items-center justify-center rounded-full border border-[#888] bg-[#3a3a3a] text-[15px] text-white">1</span>
        </div>
      </div>
    </div>
  );
}

function Callout({ className, children }: { className: string; children: ReactNode }) {
  return (
    <div className={`absolute flex flex-col items-center justify-center rounded-[38px] border-2 border-[#3f5a9c] bg-[#a278c1]/90 text-center font-['Lato',sans-serif] text-[60px] leading-[77px] text-black ${className}`}>
      {children}
    </div>
  );
}

export default function App() {
  return (
    <div className="relative h-[1152px] w-[2048px] overflow-hidden">
      <TitleBar />
      <TabBar />
      <Ribbon />
      <FormulaBar />
      <div className="flex">
        <Sheet />
        <VScroll />
      </div>
      <SheetTabs />
      <StatusBar />
      <Taskbar />

      {/* slide annotations on top of the screen recording */}
      <svg width="2048" height="1152" viewBox="0 0 2048 1152" className="pointer-events-none absolute left-0 top-0">
        <path d="M1570 458l28 29h-14v47h-28v-47h-14z" fill="#fe0000" stroke="#3f5a9c" strokeWidth="2" />
        <path d="M654 793l49-4-12 15 60 50-23 25-58-52-12 16z" fill="#fe0000" stroke="#3f5a9c" strokeWidth="2" />
      </svg>
      <Callout className="left-[1235px] top-[546px] h-[222px] w-[770px]">
        <p><span className="text-[#fe0000]">5.</span> Write out your formula.</p>
        <p>Make sure the formula</p>
        <p>correct.</p>
      </Callout>
      <Callout className="left-[502px] top-[891px] h-[180px] w-[594px]">
        <p><span className="text-[#fe0000]">4.</span> Write out your</p>
        <p>pass and fail criteria.</p>
      </Callout>
    </div>
  );
}
